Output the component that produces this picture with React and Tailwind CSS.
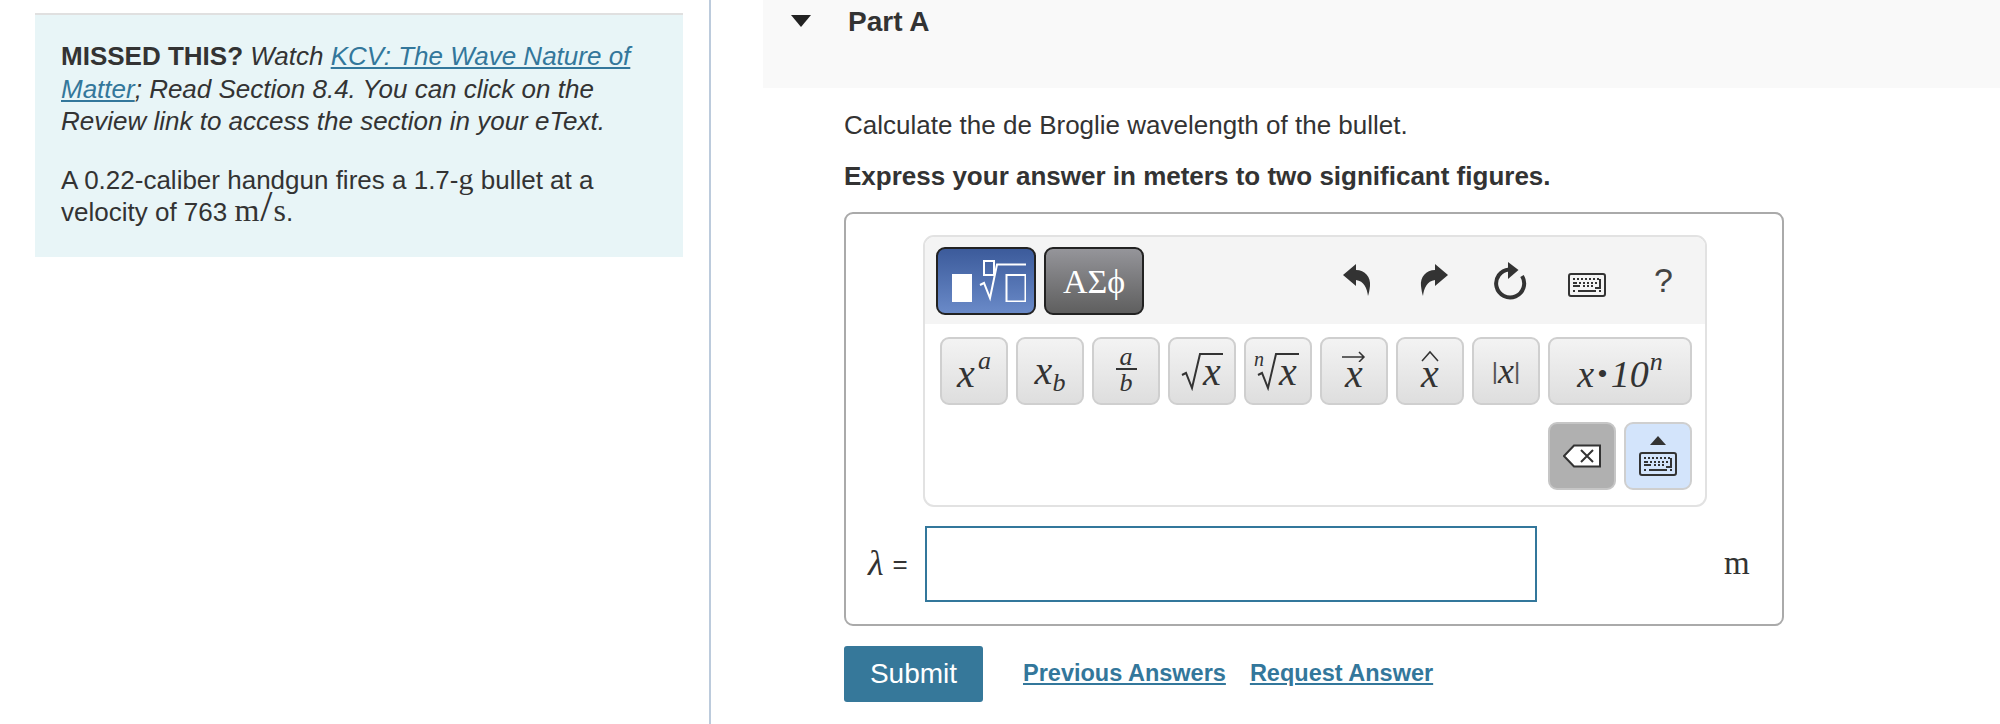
import React from 'react';

const serif = "font-['Liberation_Serif',serif]";

const KeyBtn = ({ className = 'w-[68px]', children }) => (
  <div className={`${className} h-[68px] shrink-0 rounded-[9px] border-2 border-[#cfcfcf] bg-linear-to-b from-[#f3f3f3] to-[#dedede] flex items-center justify-center text-[#333] ${serif}`}>
    {children}
  </div>
);

const Radical = ({ index }) => (
  <span className="flex items-start relative">
    <svg width="22" height="38" viewBox="0 0 22 38" className="mt-[1px]">
      <path d="M1 22 L5 20 L11 35 L19 1 L22 1" fill="none" stroke="#333" strokeWidth="2" />
    </svg>
    {index && <i className="absolute -left-[3px] -top-[3px] text-[20px] leading-none">n</i>}
    <i className="text-[40px] leading-[34px] border-t-2 border-[#333] pr-[2px] h-[34px] mt-[1px]">x</i>
  </span>
);

const Keyboard = () => (
  <svg width="38" height="24" viewBox="0 0 38 24">
    <rect x="1" y="1" width="36" height="22" rx="2" fill="none" stroke="#333" strokeWidth="2" />
    <path d="M5 6h2M9 6h2M13 6h2M17 6h2M21 6h2M25 6h2M29 6h2 M5 10h4M11 10h2M15 10h2M19 10h2M23 10h2M27 10h2 M5 13h7M15 13h2M19 13h2M23 13h2 M32 6v9h-5 M5 18h2M10 18h18M31 18h2" stroke="#333" strokeWidth="2" fill="none" />
  </svg>
);

export default function App() {
  return (
    <div className="h-[724px] w-[2000px] flex overflow-hidden bg-white font-['Liberation_Sans',sans-serif] text-[#333]">
      <div className="w-[711px] shrink-0 h-full border-r-2 border-[#bccbdc] pl-[35px] pr-[26px] pt-[13px]">
        <div className="border-t-2 border-[#e0e0e0] bg-[#e8f5f7] h-[244px] pl-[26px] pr-[30px] pt-[25px] text-[26px] leading-[32.5px]">
          <p className="italic">
            <b className="not-italic">MISSED THIS?</b> Watch{' '}
            <a className="text-[#33779b] underline">KCV: The Wave Nature of Matter</a>; Read Section 8.4. You can click on the Review link to access the section in your eText.
          </p>
          <p className="mt-[26px]">
            A 0.22-caliber handgun fires a 1.7-<span className={`${serif} text-[30px] leading-[20px]`}>g</span> bullet at a velocity of 763{' '}
            <span className={`${serif} text-[32px] leading-[20px]`}>m<span className="text-[44px] leading-[20px] font-light mx-[1px]">/</span>s</span>.
          </p>
        </div>
      </div>

      <div className="flex-1 pl-[52px]">
        <div className="h-[88px] bg-[#f9f9f9] flex items-start pl-[28px] pt-[5px]">
          <svg width="20" height="12" viewBox="0 0 20 12" className="mt-[10px]"><path d="M0 0h20L10 12z" fill="#222" /></svg>
          <h2 className="ml-[37px] text-[28px] leading-[34px] font-bold">Part A</h2>
        </div>

        <div className="pl-[81px] pr-[216px]">
          <p className="mt-[21px] text-[26px] leading-[32px]">Calculate the de Broglie wavelength of the bullet.</p>
          <p className="mt-[19px] text-[26px] leading-[32px] font-bold">Express your answer in meters to two significant figures.</p>

          <div className="mt-[20px] h-[414px] rounded-[9px] border-2 border-[#aaaaaa] pt-[21px]">
            <div className="ml-[77px] w-[784px] h-[272px] rounded-[11px] border-2 border-[#e2e2e2]">
              <div className="h-[87px] bg-[#f4f4f4] rounded-t-[9px] flex items-start pt-[10px] pl-[11px]">
                <div className="w-[100px] h-[68px] rounded-[9px] border-2 border-[#222] bg-linear-to-b from-[#3c5b9b] to-[#6a8ac8] flex items-center justify-center">
                  <svg width="74" height="42" viewBox="0 0 74 42" className="ml-[6px]">
                    <rect x="0" y="14" width="20" height="28" fill="#fff" />
                    <path d="M32 1h10v14h-10zM28 25l4 -2 6 15 7 -33.500h29M54.500 15h19v26.500h-19z" fill="none" stroke="#fff" strokeWidth="2" />
                  </svg>
                </div>
                <div className={`ml-[8px] w-[100px] h-[68px] rounded-[9px] border-2 border-[#222] bg-linear-to-b from-[#95959a] to-[#5f5f5f] flex items-center justify-center text-white text-[34px] ${serif}`}>
                  ΑΣϕ
                </div>
                <div className="flex-1 flex items-start">
                  <svg width="28" height="32" viewBox="0 0 28 32" className="ml-[199px] mt-[17px]">
                    <path d="M0 11 L13 0 V6 C22 6 28 13 27 22 C26.5 26 26 29 25 32 C24 24 21 17 13 16 V22 Z" fill="#333" />
                  </svg>
                  <svg width="28" height="32" viewBox="0 0 28 32" className="ml-[49px] mt-[17px] -scale-x-100">
                    <path d="M0 11 L13 0 V6 C22 6 28 13 27 22 C26.5 26 26 29 25 32 C24 24 21 17 13 16 V22 Z" fill="#333" />
                  </svg>
                  <svg width="34" height="38" viewBox="0 0 34 38" className="ml-[46px] mt-[15px]">
                    <path d="M15 7.500 A14 14 0 1 0 28 14" fill="none" stroke="#333" strokeWidth="4" />
                    <path d="M14 0 L24.500 8 L14 17 Z" fill="#333" />
                  </svg>
                  <div className="ml-[40px] mt-[26px]"><Keyboard /></div>
                  <span className="ml-[48px] mt-[15px] text-[34px] leading-[36px] text-[#444]">?</span>
                </div>
              </div>

              <div className="pl-[15px] pt-[13px] flex gap-[8px]">
                <KeyBtn>
                  <span className="flex items-start"><i className="text-[40px] leading-[40px] mt-[6px]">x</i><i className="text-[26px] leading-[26px] ml-[3px]">a</i></span>
                </KeyBtn>
                <KeyBtn>
                  <span className="flex items-end"><i className="text-[40px] leading-[40px]">x</i><i className="text-[26px] leading-[26px] -mb-[5px]">b</i></span>
                </KeyBtn>
                <KeyBtn>
                  <span className="flex flex-col items-center"><i className="text-[26px] leading-[22px] px-[4px] border-b-2 border-[#333]">a</i><i className="text-[26px] leading-[26px]">b</i></span>
                </KeyBtn>
                <KeyBtn><Radical /></KeyBtn>
                <KeyBtn><Radical index /></KeyBtn>
                <KeyBtn>
                  <span className="flex flex-col items-center -mt-[6px]">
                    <svg width="24" height="12" viewBox="0 0 24 12"><path d="M0 7h22M17 2l5 5-5 5" fill="none" stroke="#333" strokeWidth="1.500" /></svg>
                    <i className="text-[40px] leading-[24px]">x</i>
                  </span>
                </KeyBtn>
                <KeyBtn>
                  <span className="flex flex-col items-center -mt-[6px]">
                    <svg width="18" height="12" viewBox="0 0 18 12"><path d="M1 11l8-9 8 9" fill="none" stroke="#333" strokeWidth="1.500" /></svg>
                    <i className="text-[40px] leading-[24px]">x</i>
                  </span>
                </KeyBtn>
                <KeyBtn>
                  <span className="flex items-center"><span className="font-['Liberation_Sans',sans-serif] text-[24px] text-[#555]">|</span><i className="text-[36px] leading-[36px]">x</i><span className="font-['Liberation_Sans',sans-serif] text-[24px] text-[#555]">|</span></span>
                </KeyBtn>
                <KeyBtn className="w-[144px]">
                  <span className="flex items-start italic">
                    <span className="text-[38px] leading-[40px] mt-[5px]">x</span>
                    <span className="text-[30px] leading-[40px] mt-[5px] mx-[3px] not-italic">•</span>
                    <span className="text-[38px] leading-[40px] mt-[5px]">10</span>
                    <span className="text-[26px] leading-[26px] ml-[1px]">n</span>
                  </span>
                </KeyBtn>
              </div>

              <div className="pl-[623px] pt-[17px] flex gap-[8px]">
                <div className="w-[68px] h-[68px] rounded-[9px] border-2 border-[#c6c6c6] bg-[#b0b0b0] flex items-center justify-center">
                  <svg width="38" height="24" viewBox="0 0 38 24">
                    <path d="M1 12 L11 1.500 H37 V22.500 H11 Z" fill="#fff" stroke="#333" strokeWidth="2" />
                    <path d="M18 6 L30 18 M30 6 L18 18" stroke="#333" strokeWidth="2" />
                  </svg>
                </div>
                <div className="w-[68px] h-[68px] rounded-[9px] border-2 border-[#cfcfcf] bg-[#d3e4fb] flex flex-col items-center justify-center gap-[7px]">
                  <svg width="16" height="9" viewBox="0 0 16 9"><path d="M8 0L16 9H0z" fill="#333" /></svg>
                  <Keyboard />
                </div>
              </div>
            </div>

            <div className="mt-[19px] flex items-center pl-[22px]">
              <span className="w-[57px] text-[26px] flex items-center gap-[9px]">
                <i className={`${serif} text-[36px] leading-none -mt-[2px]`}>λ</i>
                <span>=</span>
              </span>
              <input className="w-[612px] h-[76px] border-2 border-[#33779b] bg-white outline-none" />
              <span className={`ml-[187px] -mt-[1px] text-[33px] ${serif}`}>m</span>
            </div>
          </div>

          <div className="mt-[20px] flex items-center">
            <button className="w-[139px] h-[56px] rounded-[3px] bg-[#36789a] text-white text-[28px]">Submit</button>
            <a className="ml-[40px] text-[23.500px] font-bold text-[#33779b] underline">Previous Answers</a>
            <a className="ml-[24px] text-[23.500px] font-bold text-[#33779b] underline">Request Answer</a>
          </div>
        </div>
      </div>
    </div>
  );
}
